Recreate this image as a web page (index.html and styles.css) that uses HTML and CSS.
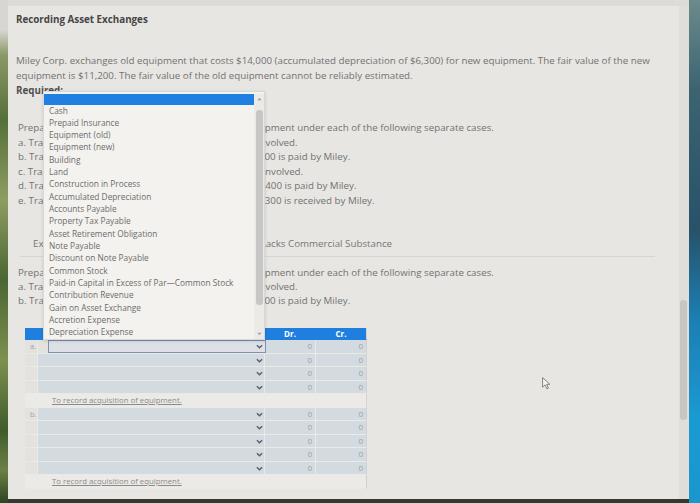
FILE: index.html
```html
<!DOCTYPE html>
<html lang="en">
<head>
<meta charset="utf-8">
<title>Recording Asset Exchanges</title>
<link rel="stylesheet" href="styles.css">
</head>
<body>
<div class="photo">
  <div class="plant"></div>
  <div class="screen">
    <div class="bezel-top"></div>
    <div class="viewport">
      <main class="page">
        <h1 class="title">Recording Asset Exchanges</h1>
        <p class="intro">Miley Corp. exchanges old equipment that costs $14,000 (accumulated depreciation of $6,300) for new equipment. The fair value of the new equipment is $11,200. The fair value of the old equipment cannot be reliably estimated.</p>
        <h2 class="req">Required:</h2>
        <div class="cases">
          <p>Prepare journal entries to record the exchange of equipment under each of the following separate cases.</p>
          <p>a. Transaction has commercial substance; no cash is involved.</p>
          <p>b. Transaction has commercial substance; cash of $1,000 is paid by Miley.</p>
          <p>c. Transaction lacks commercial substance; no cash is involved.</p>
          <p>d. Transaction lacks commercial substance; cash of $1,400 is paid by Miley.</p>
          <p>e. Transaction lacks commercial substance; cash of $1,300 is received by Miley.</p>
        </div>
        <div class="tabs">
          <span class="tab">Exchange Has Commercial Substance</span>
          <span class="tab active">Exchange Lacks Commercial Substance</span>
        </div>
        <div class="cases cases-2">
          <p>Prepare journal entries to record the exchange of equipment under each of the following separate cases.</p>
          <p>a. Transaction has commercial substance; no cash is involved.</p>
          <p>b. Transaction has commercial substance; cash of $1,000 is paid by Miley.</p>
        </div>
        <div class="journal">
          <div class="cell head"></div>
          <div class="cell head"></div>
          <div class="cell head">Dr.</div>
          <div class="cell head">Cr.</div>

          <div class="cell no">a.</div>
          <div class="cell acct first"><div class="select"><svg class="chev" viewBox="0 0 8 5"><path d="M1 1 L4 4 L7 1"/></svg></div></div>
          <div class="cell num">0</div>
          <div class="cell num">0</div>

          <div class="cell no"></div>
          <div class="cell acct"><svg class="chev" viewBox="0 0 8 5"><path d="M1 1 L4 4 L7 1"/></svg></div>
          <div class="cell num">0</div>
          <div class="cell num">0</div>

          <div class="cell no"></div>
          <div class="cell acct"><svg class="chev" viewBox="0 0 8 5"><path d="M1 1 L4 4 L7 1"/></svg></div>
          <div class="cell num">0</div>
          <div class="cell num">0</div>

          <div class="cell no"></div>
          <div class="cell acct"><svg class="chev" viewBox="0 0 8 5"><path d="M1 1 L4 4 L7 1"/></svg></div>
          <div class="cell num">0</div>
          <div class="cell num">0</div>

          <div class="cell no memo"></div>
          <div class="cell memo memo-text"><a href="#">To record acquisition of equipment.</a></div>
          <div class="cell memo"></div>
          <div class="cell memo"></div>

          <div class="cell no">b.</div>
          <div class="cell acct"><svg class="chev" viewBox="0 0 8 5"><path d="M1 1 L4 4 L7 1"/></svg></div>
          <div class="cell num">0</div>
          <div class="cell num">0</div>

          <div class="cell no"></div>
          <div class="cell acct"><svg class="chev" viewBox="0 0 8 5"><path d="M1 1 L4 4 L7 1"/></svg></div>
          <div class="cell num">0</div>
          <div class="cell num">0</div>

          <div class="cell no"></div>
          <div class="cell acct"><svg class="chev" viewBox="0 0 8 5"><path d="M1 1 L4 4 L7 1"/></svg></div>
          <div class="cell num">0</div>
          <div class="cell num">0</div>

          <div class="cell no"></div>
          <div class="cell acct"><svg class="chev" viewBox="0 0 8 5"><path d="M1 1 L4 4 L7 1"/></svg></div>
          <div class="cell num">0</div>
          <div class="cell num">0</div>

          <div class="cell no"></div>
          <div class="cell acct"><svg class="chev" viewBox="0 0 8 5"><path d="M1 1 L4 4 L7 1"/></svg></div>
          <div class="cell num">0</div>
          <div class="cell num">0</div>

          <div class="cell no memo"></div>
          <div class="cell memo memo-text"><a href="#">To record acquisition of equipment.</a></div>
          <div class="cell memo"></div>
          <div class="cell memo"></div>
        </div>
      </main>
      <div class="vscroll"><div class="vthumb"></div></div>
    </div>
    <div class="bezel-bottom"></div>
  </div>
  <div class="backdrop"></div>

  <div class="dropdown">
    <ul class="dd-list">
      <li class="dd-sel"></li>
      <li>Cash</li>
      <li>Prepaid Insurance</li>
      <li>Equipment (old)</li>
      <li>Equipment (new)</li>
      <li>Building</li>
      <li>Land</li>
      <li>Construction in Process</li>
      <li>Accumulated Depreciation</li>
      <li>Accounts Payable</li>
      <li>Property Tax Payable</li>
      <li>Asset Retirement Obligation</li>
      <li>Note Payable</li>
      <li>Discount on Note Payable</li>
      <li>Common Stock</li>
      <li>Paid-in Capital in Excess of Par—Common Stock</li>
      <li>Contribution Revenue</li>
      <li>Gain on Asset Exchange</li>
      <li>Accretion Expense</li>
      <li>Depreciation Expense</li>
    </ul>
    <div class="dd-scroll">
      <svg class="dd-arrow" viewBox="0 0 6 4"><path d="M0.5 3.5 L3 0.8 L5.5 3.5 Z"/></svg>
      <div class="dd-thumb"></div>
      <svg class="dd-arrow" viewBox="0 0 6 4"><path d="M0.5 0.5 L3 3.2 L5.5 0.5 Z"/></svg>
    </div>
  </div>

  <svg class="cursor" viewBox="0 0 9 13"><path d="M0.6 0.6 L0.6 10.2 L3 7.9 L4.9 11.8 L6.4 11.1 L4.6 7.3 L7.9 7.3 Z"/></svg>
</div>
</body>
</html>
```

FILE: styles.css
```css
* { box-sizing: border-box; }

html, body {
  margin: 0;
  padding: 0;
}

body {
  width: 700px;
  height: 503px;
  overflow: hidden;
  background: #1d3f4a;
  font-family: "Open Sans", "DejaVu Sans", sans-serif;
}

.photo {
  position: relative;
  display: flex;
  width: 700px;
  height: 503px;
}

.plant {
  width: 8px;
  background: linear-gradient(180deg, #d8d6d1 0, #d8d6d1 30px, #8b9868 55px, #55703a 120px, #8e9d62 200px, #4a6632 280px, #7d9050 360px, #3f5c2c 430px, #6c8046 470px, #2c4424 503px);
}

.screen {
  width: 681px;
  display: flex;
  flex-direction: column;
  background: #e8e6e2;
}

.bezel-top {
  height: 6px;
  background: #dddbd7;
}

.viewport {
  flex: 1;
  display: flex;
  min-height: 0;
}

.page {
  flex: 1;
  padding: 7px 0 0 8px;
  color: #727272;
}

.vscroll {
  width: 10px;
  background: #e0deda;
  padding-top: 294px;
}

.vthumb {
  width: 7px;
  height: 120px;
  margin-left: 1px;
  border-radius: 3px;
  background: #c7c6c3;
}

.bezel-bottom {
  height: 4px;
  background: #2e3b2e;
}

.backdrop {
  flex: 1;
  background: linear-gradient(180deg, #6d8a8c 0, #3b6470 90px, #27526a 230px, #1b7fb4 320px, #1b9ad2 420px, #1a96cc 503px);
}

/* ---------- text ---------- */

.title {
  margin: 0;
  font-size: 9.8px;
  line-height: 14px;
  font-weight: 700;
  color: #454545;
}

.intro {
  margin: 25.5px 0 0;
  width: 650px;
  font-size: 9.75px;
  line-height: 15px;
}

.req {
  margin: 0;
  font-size: 9.8px;
  line-height: 15px;
  font-weight: 700;
  color: #505050;
}

.cases {
  margin: 23.5px 0 0 2px;
  font-size: 9.75px;
  line-height: 14.5px;
}

.cases p {
  margin: 0;
  white-space: nowrap;
}

.cases-2 {
  margin-top: 9px;
  line-height: 14px;
}

.tabs {
  display: flex;
  margin: 24px 0 0 4px;
  width: 635px;
  height: 25px;
  border-bottom: 1px solid #d6d5d1;
}

.tab {
  padding: 0 0 0 12px;
  font-size: 9.75px;
  line-height: 24px;
  color: #777;
  white-space: nowrap;
}

.tab:first-child {
  padding-left: 13px;
}

/* ---------- journal ---------- */

.journal {
  display: grid;
  grid-template-columns: 13px 227px 51px 51px;
  grid-template-rows: 12px repeat(11, 13.5px);
  margin: 20px 0 0 9px;
  width: 342px;
}

.cell {
  border-right: 1px solid #e9e9e6;
  border-bottom: 1px solid #e9e9e6;
  font-size: 8px;
  line-height: 12.5px;
  overflow: hidden;
}

.head {
  background: #1f7fdf;
  border-color: #1f7fdf;
  color: #fff;
  font-weight: 700;
  text-align: center;
  line-height: 12px;
}

.no {
  background: #e3e2de;
  color: #a2a2a2;
  font-size: 7.5px;
  padding-left: 5px;
}

.acct {
  position: relative;
  background: #d3dbe0;
}

.acct.first {
  background: #e3e2de;
  padding-left: 10px;
  overflow: visible;
}

.select {
  position: relative;
  height: 12.5px;
  margin-right: -2px;
  border: 1px solid #7b90b4;
  background: #dde1e5;
}

.chev {
  position: absolute;
  right: 1px;
  top: 4px;
  width: 7px;
  height: 5px;
  fill: none;
  stroke: #55606e;
  stroke-width: 1.6;
}

.select .chev {
  right: 2px;
  top: 3px;
}

.num {
  background: #d3dbe0;
  text-align: right;
  padding-right: 3px;
  color: #98a3ab;
}

.memo {
  background: #ebeae7;
}

.memo-text {
  padding-left: 14px;
  font-size: 7.8px;
}

.memo-text a {
  color: #8a8a8a;
  text-decoration: underline;
}

.journal .cell:nth-child(4n) {
  border-right-color: #d2d3d1;
}

/* ---------- open dropdown (overlay) ---------- */

.dropdown {
  position: absolute;
  left: 43px;
  top: 91px;
  width: 222px;
  height: 249px;
  display: flex;
  padding-top: 2px;
  background: #f3f2ef;
  border: 1px solid #d8d8d6;
  box-shadow: 0 1px 3px rgba(0, 0, 0, 0.15);
}

.dd-list {
  flex: 1;
  margin: 0;
  padding: 0;
  list-style: none;
}

.dd-list li {
  height: 12.33px;
  padding-left: 5px;
  font-size: 8.3px;
  line-height: 12.33px;
  color: #6c6c6c;
  white-space: nowrap;
}

.dd-list .dd-sel {
  height: 10.5px;
  background: #1f80e2;
}

.dd-scroll {
  width: 10px;
  display: flex;
  flex-direction: column;
  align-items: center;
  background: #ebeae7;
}

.dd-arrow {
  width: 5px;
  height: 4px;
  margin: 3px 0;
  fill: #9a9a9a;
}

.dd-thumb {
  width: 7px;
  height: 195px;
  margin: 6px 0 auto;
  border-radius: 3px;
  background: #c6c6c4;
}

.cursor {
  position: absolute;
  left: 542px;
  top: 377px;
  width: 9px;
  height: 13px;
  fill: #f4f4f4;
  stroke: #777;
  stroke-width: 0.9;
}
```
